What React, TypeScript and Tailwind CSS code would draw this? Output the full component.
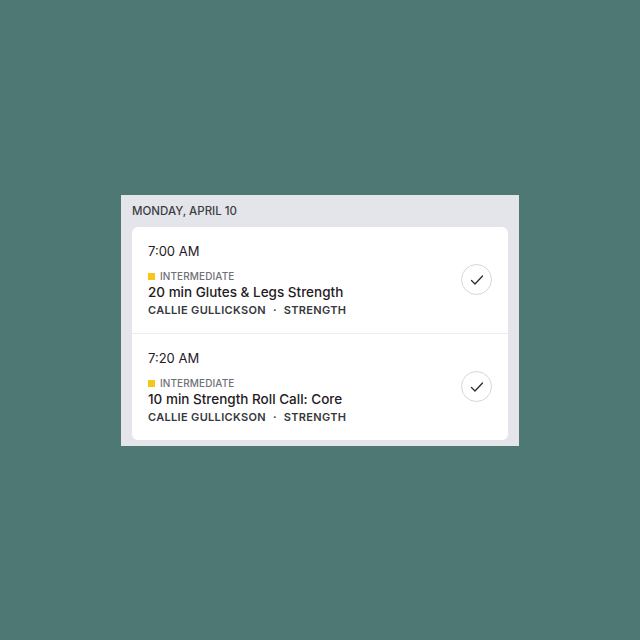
import React from 'react'

type Session = { time: string; level: string; title: string; instructor: string; category: string }

const sessions: Session[] = [
  { time: '7:00 AM', level: 'INTERMEDIATE', title: '20 min Glutes & Legs Strength', instructor: 'CALLIE GULLICKSON', category: 'STRENGTH' },
  { time: '7:20 AM', level: 'INTERMEDIATE', title: '10 min Strength Roll Call: Core', instructor: 'CALLIE GULLICKSON', category: 'STRENGTH' },
]

function CheckCircle() {
  return (
    <div className="w-[31px] h-[31px] rounded-full border border-[#d6d7db] flex items-center justify-center">
      <svg width="14" height="12" viewBox="0 0 14 12" fill="none">
        <path d="M1.5 6.5 L5 10 L12.5 2" stroke="#2b2c30" strokeWidth="1.3" strokeLinecap="round" strokeLinejoin="round" />
      </svg>
    </div>
  )
}

function Row(props: { s: Session }) {
  const s = props.s
  return (
    <div className="h-[106px] px-[16px] flex items-center justify-between">
      <div className="self-start pt-[14px]">
        <div className="text-[13px] leading-[20px] text-[#1f2024]">{s.time}</div>
        <div className="mt-[9px] flex items-center gap-[5px] h-[13px]">
          <span className="w-[7px] h-[7px] bg-[#f6c619] inline-block" />
          <span className="text-[10px] leading-[13px] tracking-[0.01em] text-[#6f7177] font-medium">{s.level}</span>
        </div>
        <div className="text-[13.5px] leading-[19px] text-[#1f2024] font-medium">{s.title}</div>
        <div className="mt-[1px] text-[11px] leading-[14px] tracking-[0.03em] text-[#36383c] font-semibold">
          {s.instructor}
          <span className="mx-[7px]">·</span>
          {s.category}
        </div>
      </div>
      <CheckCircle />
    </div>
  )
}

export default function App() {
  return (
    <div className="w-full h-[640px] bg-[#4e7873] flex items-center justify-center" style={{ fontFamily: 'Inter, "Noto Sans", sans-serif' }}>
      <div className="w-[398px] bg-[#e4e5ea] px-[11px] pb-[6px]">
        <div className="pt-[8px] mb-[8px] text-[11.5px] leading-[16px] text-[#3c3e43] font-medium">MONDAY, APRIL 10</div>
        <div className="bg-white rounded-[6px] flex flex-col">
          <Row s={sessions[0]} />
          <div className="h-px bg-[#ececef]" />
          <Row s={sessions[1]} />
        </div>
      </div>
    </div>
  )
}
